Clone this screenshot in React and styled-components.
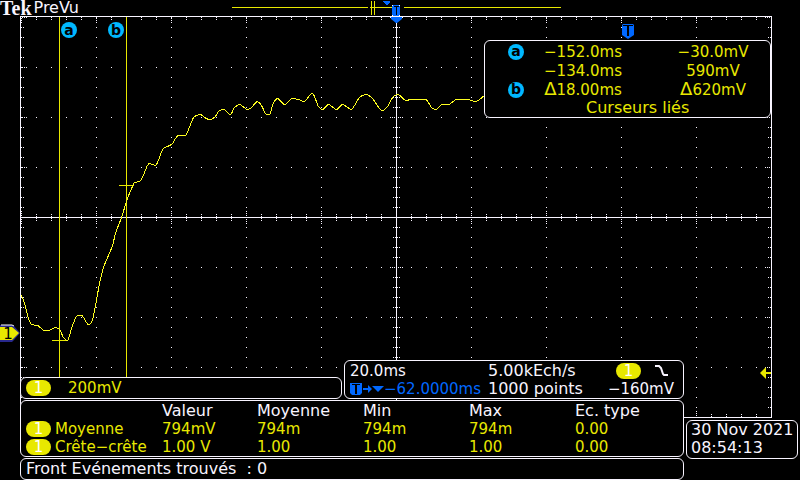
import React from "react";
import styled, { createGlobalStyle, css } from "styled-components";

const c = {
  yellow: "#e8e800",
  white: "#f8f4ff",
  cyan: "#00b8ff",
  blue: "#0068ff",
};

const GlobalStyle = createGlobalStyle`
  * { box-sizing: border-box; }
  body {
    margin: 0;
    background: #000;
    color: ${c.white};
    font: 15px/18px "DejaVu Sans", sans-serif;
  }
`;

const Screen = styled.main`
  display: flex;
  flex-direction: column;
  min-height: 100vh;
  background: #000;
`;

const Header = styled.header`
  display: grid;
  grid-template-columns: 1fr 328px 1fr;
  height: 16px;
  padding-right: 8px;
`;

const Brand = styled.div`
  display: flex;
  align-items: center;
  gap: 2px;
  font-size: 16px;
  line-height: 16px;
`;

const Logo = styled.strong`
  font: bold 20px/16px "Liberation Serif", serif;
`;

const Overview = styled.svg`
  width: 100%;
  height: 16px;
  overflow: visible;
`;

const Stage = styled.section`
  flex: 1;
  display: grid;
`;

const Plot = styled.svg`
  grid-area: 1 / 1;
  display: block;
  width: 100%;
  align-self: start;
`;

const Overlay = styled.div`
  grid-area: 1 / 1;
  display: flex;
  flex-direction: column;
  justify-content: space-between;
  padding: 24px 2px 0 20px;
`;

const Panel = styled.section`
  border: 1px solid ${c.white};
  border-radius: 6px;
  background: #000;
  color: ${(p) => (p.$yellow ? c.yellow : c.white)};
`;

const CursorPanel = styled(Panel)`
  align-self: flex-end;
  width: 287px;
  margin-right: 27px;
  padding: 1px 0 0;
`;

const Table = styled.table`
  width: 100%;
  border-collapse: collapse;
  table-layout: fixed;
`;

const Cell = styled.td`
  height: ${(p) => (p.$tall ? 19 : 18)}px;
  padding: 0 0 0 ${(p) => p.$indent || 0}px;
  font-weight: normal;
  text-align: ${(p) => p.$align || "left"};
  white-space: nowrap;
  ${(p) => p.$head && css`
    color: ${c.white};
    font-size: 16px;
  `}
`;

const Col = styled.col`
  width: ${(p) => p.$w}px;
`;

const CursorDot = styled.span`
  display: block;
  width: 16px;
  height: 16px;
  margin-left: 23px;
  border-radius: 8px;
  background: ${c.cyan};
  color: #000;
  font-weight: bold;
  font-size: 14px;
  line-height: 15px;
  text-align: center;
`;

const Delta = styled.span`
  font-size: 18px;
  line-height: 15px;
`;

const CursorMode = styled.span`
  padding-left: 47px;
  font-size: 16px;
`;

const Pill = styled.span`
  display: inline-block;
  width: 25px;
  height: 16px;
  border-radius: 8px;
  background: ${c.yellow};
  color: #fff;
  line-height: 16px;
  text-align: center;
`;

const Bottom = styled.div`
  display: flex;
  align-items: flex-end;
  gap: 2px;
`;

const Readouts = styled.div`
  flex: 1;
  display: flex;
  flex-direction: column;
  gap: 1px;
`;

const Settings = styled.div`
  display: flex;
  align-items: flex-end;
  gap: 2px;
`;

const Channel = styled(Panel)`
  flex: 322 1 322px;
  display: flex;
  align-items: center;
  gap: 17px;
  height: 22px;
  padding-left: 5px;
`;

const Timebase = styled(Panel)`
  flex: 340 1 340px;
  display: grid;
  grid-template-columns: 138px 1fr auto;
  padding: 1px 9px 0 5px;
`;

const Large = styled.span`
  font-size: 16px;
  white-space: pre;
`;

const Right = styled.span`
  display: flex;
  align-items: center;
  justify-content: flex-end;
  gap: 14px;
`;

const Delay = styled.span`
  display: flex;
  align-items: center;
  color: ${c.blue};
  white-space: nowrap;
`;

const Measures = styled(Panel)`
  padding: 1px 0 0 5px;
`;

const Label = styled.span`
  display: flex;
  align-items: center;
  gap: 4px;
  color: ${c.yellow};
`;

const Status = styled(Panel)`
  padding: 1px 5px;
`;

const Clock = styled(Panel)`
  width: 112px;
  margin-bottom: 21px;
  padding: 0 4px 1px;
  font-size: 16px;
  white-space: nowrap;
`;

const SvgText = styled.text`
  font: ${(p) => p.$weight || "bold"} ${(p) => p.$size || 14}px "DejaVu Sans", sans-serif;
  text-anchor: middle;
`;

const range = (n) => Array.from({ length: n }, (_, i) => i);

const dot = (x, y) => `M${x} ${y}h1v1h-1z`;

function graticule() {
  const d = [];
  for (const j of range(41)) {
    const y = 17 + j * 10;
    const major = j % 5 === 0;
    for (const i of range(9)) if (i !== 4) d.push(dot(96 + i * 75, y));
    for (const o of major ? [2, 4, 6] : [1, 3]) {
      d.push(dot(20 + o, y), dot(771 - o, y), dot(396 - o, y), dot(396 + o, y));
    }
  }
  for (const i of range(51)) {
    const x = 21 + i * 15;
    const major = i % 5 === 0;
    for (const j of range(7)) if (j !== 3) d.push(dot(x, 67 + j * 50));
    for (const o of major ? [2, 4, 6] : [1, 3]) {
      d.push(dot(x, 16 + o), dot(x, 417 - o), dot(x, 217 - o), dot(x, 217 + o));
    }
  }
  return d.join("");
}

const SAMPLES = [
  [21, 295], [23, 300], [26, 310], [28, 318], [31, 324], [37, 325], [44, 330], [48, 330],
  [55, 327], [59, 329], [63, 337], [67, 340], [71, 328], [77, 315], [81, 315], [88, 324],
  [91, 322], [95, 305], [99, 283], [103, 267], [112, 245], [115, 233], [121, 217], [127, 198],
  [132, 186], [134, 182], [139, 181], [142, 177], [147, 165], [149, 163], [155, 165],
  [157, 162], [163, 148], [171, 144], [178, 135], [185, 135], [188, 129], [194, 116],
  [200, 114], [204, 117], [209, 119], [214, 117], [219, 110], [223, 109], [230, 114],
  [234, 107], [239, 104], [247, 109], [251, 107], [257, 101], [261, 105], [266, 114],
  [269, 114], [273, 102], [277, 98], [284, 104], [292, 98], [298, 99], [303, 101],
  [312, 93], [314, 96], [318, 106], [322, 109], [328, 104], [336, 109], [342, 104],
  [351, 109], [354, 105], [360, 96], [366, 94], [371, 97], [382, 110], [387, 106],
  [393, 96], [397, 94], [406, 100], [410, 99], [425, 99], [432, 108], [435, 109],
  [442, 104], [448, 104], [456, 99], [467, 99], [475, 101], [484, 95],
];

// Monotone cubic interpolation: the curve levels off at every peak and trough.
function smooth(points) {
  const slopes = range(points.length - 1).map(
    (i) => (points[i + 1][1] - points[i][1]) / (points[i + 1][0] - points[i][0])
  );
  const tangents = points.map((_, i) => {
    const l = slopes[i - 1];
    const r = slopes[i];
    if (l === undefined) return r;
    if (r === undefined) return l;
    return l * r <= 0 ? 0 : (2 * l * r) / (l + r);
  });
  return points.reduce((d, [x, y], i) => {
    if (i === 0) return `M${x} ${y}`;
    const [px, py] = points[i - 1];
    const h = (x - px) / 3;
    return `${d}C${px + h} ${py + tangents[i - 1] * h} ${x - h} ${y - tangents[i] * h} ${x} ${y}`;
  }, "");
}

function Waveform() {
  return (
    <Plot viewBox="0 16 800 404" role="img" aria-label="Canal 1">
      <g shapeRendering="crispEdges" fill={c.white}>
        <path d={graticule()} />
        <path d="M20 16h752v1h-752zM20 16h1v402h-1zM771 16h1v402h-1zM20 417h752v1h-752zM396 16h1v401h-1zM20 217h752v1h-752z" />
      </g>
      <g shapeRendering="crispEdges" fill={c.yellow}>
        <path d="M59 17h1v360h-1zM126 17h1v360h-1zM52 340h15v1h-15zM119 185h15v1h-15z" />
      </g>
      <path
        d={smooth(SAMPLES)}
        transform="translate(0.5 0.5)"
        fill="none"
        stroke="#ffff20"
        strokeWidth="1"
        shapeRendering="crispEdges"
      />
      <circle cx="69" cy="30" r="8" fill={c.cyan} />
      <SvgText x="69" y="35">a</SvgText>
      <circle cx="116" cy="30" r="8" fill={c.cyan} />
      <SvgText x="116" y="35">b</SvgText>
      <path d="M391 17h11v2l-5 4h-1l-5-4z" fill={c.blue} />
      <path d="M623 24h10l1 1v10l-3 2-3 2-3-2-3-2v-10z" fill={c.blue} />
      <path d="M623 25h10v1h-4v10h-2v-10h-4z" fill="#000" />
      <path d="M0 325h12l2 1 6 7-6 7-2 2h-12z" fill="#28288c" />
      <path d="M1 325h11l2 1" fill="none" stroke="#fff" />
      <path d="M0 327h12l7 6-7 7h-12z" fill={c.yellow} />
      <SvgText x="8" y="339" $size="15" $weight="normal">1</SvgText>
      <path d="M760 373l6-6v5h5v2h-5v5z" fill={c.yellow} />
    </Plot>
  );
}

const CURSORS = [
  ["a", "", "−152.0ms", "−30.0mV"],
  ["", "", "−134.0ms", "590mV"],
  ["b", "Δ", "18.00ms", "620mV"],
];

const HEADINGS = ["Valeur", "Moyenne", "Min", "Max", "Ec. type"];

const MEASURES = [
  ["Moyenne", "794mV", "794m", "794m", "794m", "0.00"],
  ["Crête−crête", "1.00 V", "1.00", "1.00", "1.00", "0.00"],
];

export default function App() {
  return (
    <Screen>
      <GlobalStyle />
      <Header>
        <Brand>
          <Logo>Tek</Logo>
          <span>PreVu</span>
        </Brand>
        <Overview viewBox="232 0 328 16" aria-hidden="true">
          <path
            d="M232 7h136v1h-136zM370 7h5v1h-5zM374 7h18v1h-18zM404 7h157v1h-157zM371 1h1v14h-1zM374 1h1v14h-1z"
            fill={c.yellow}
            shapeRendering="crispEdges"
          />
          <g shapeRendering="crispEdges">
            <path d="M383 1h7v1l-3 3h-1l-3-3z" fill={c.blue} />
            <path d="M392 5h8v11h-8z" fill={c.blue} />
            <path d="M392 5h1v1h-1zM399 5h1v1h-1zM392 15h1v1h-1zM399 15h1v1h-1z" fill="#fff" />
            <path d="M394 6h5v1h-2v8h-1v-8h-2z" fill="#000" />
          </g>
        </Overview>
      </Header>
      <Stage>
        <Waveform />
        <Overlay>
          <CursorPanel $yellow>
            <Table>
              <colgroup>
                <Col $w={54} />
                <Col $w={88} />
                <Col />
              </colgroup>
              <tbody>
                {CURSORS.map(([name, sign, time, level]) => (
                  <tr key={time}>
                    <Cell $tall>{name && <CursorDot>{name}</CursorDot>}</Cell>
                    <Cell $tall $align="center">
                      {sign && <Delta>{sign}</Delta>}
                      {time}
                    </Cell>
                    <Cell $tall $align="center" $indent={29}>
                      {sign && <Delta>{sign}</Delta>}
                      {level}
                    </Cell>
                  </tr>
                ))}
                <tr>
                  <Cell />
                  <Cell colSpan={2}>
                    <CursorMode>Curseurs liés</CursorMode>
                  </Cell>
                </tr>
              </tbody>
            </Table>
          </CursorPanel>
          <Bottom>
            <Readouts>
              <Settings>
                <Channel $yellow>
                  <Pill>1</Pill>
                  <span>200mV</span>
                </Channel>
                <Timebase>
                  <span>20.0ms</span>
                  <Large>5.00kEch/s</Large>
                  <Right>
                    <Pill>1</Pill>
                    <svg width="19" height="14" viewBox="0 0 19 14" aria-label="Front descendant">
                      <path d="M0 2h4l2 2 2 6 1 1h4" fill="none" stroke={c.white} strokeWidth="2" />
                    </svg>
                  </Right>
                  <Delay>
                    <svg width="34" height="14" viewBox="0 0 34 14" aria-hidden="true">
                      <path d="M0 1h12v10l-2 2h-8l-2-2z" fill={c.blue} />
                      <path d="M2 2h8v1h-3v9h-2v-9h-3z" fill="#000" />
                      <path d="M13 6h5v-3l4 4-4 4v-3h-5z" fill={c.blue} />
                      <path d="M22 4h12l-6 6z" fill={c.blue} />
                    </svg>
                    −62.0000ms
                  </Delay>
                  <Large>1000 points</Large>
                  <Right>−160mV</Right>
                </Timebase>
              </Settings>
              <Measures $yellow>
                <Table>
                  <colgroup>
                    <Col $w={136} />
                    <Col $w={95} />
                    <Col $w={106} />
                    <Col $w={106} />
                    <Col $w={106} />
                    <Col />
                  </colgroup>
                  <thead>
                    <tr>
                      <Cell />
                      {HEADINGS.map((h) => (
                        <Cell as="th" scope="col" key={h} $head>{h}</Cell>
                      ))}
                    </tr>
                  </thead>
                  <tbody>
                    {MEASURES.map(([name, ...values]) => (
                      <tr key={name}>
                        <Cell as="th" scope="row">
                          <Label>
                            <Pill>1</Pill>
                            {name}
                          </Label>
                        </Cell>
                        {values.map((v, i) => (
                          <Cell key={i}>{v}</Cell>
                        ))}
                      </tr>
                    ))}
                  </tbody>
                </Table>
              </Measures>
              <Status>
                <Large>{"Front Evénements trouvés  : 0"}</Large>
              </Status>
            </Readouts>
            <Clock>
              <div>30 Nov 2021</div>
              <div>08:54:13</div>
            </Clock>
          </Bottom>
        </Overlay>
      </Stage>
    </Screen>
  );
}
